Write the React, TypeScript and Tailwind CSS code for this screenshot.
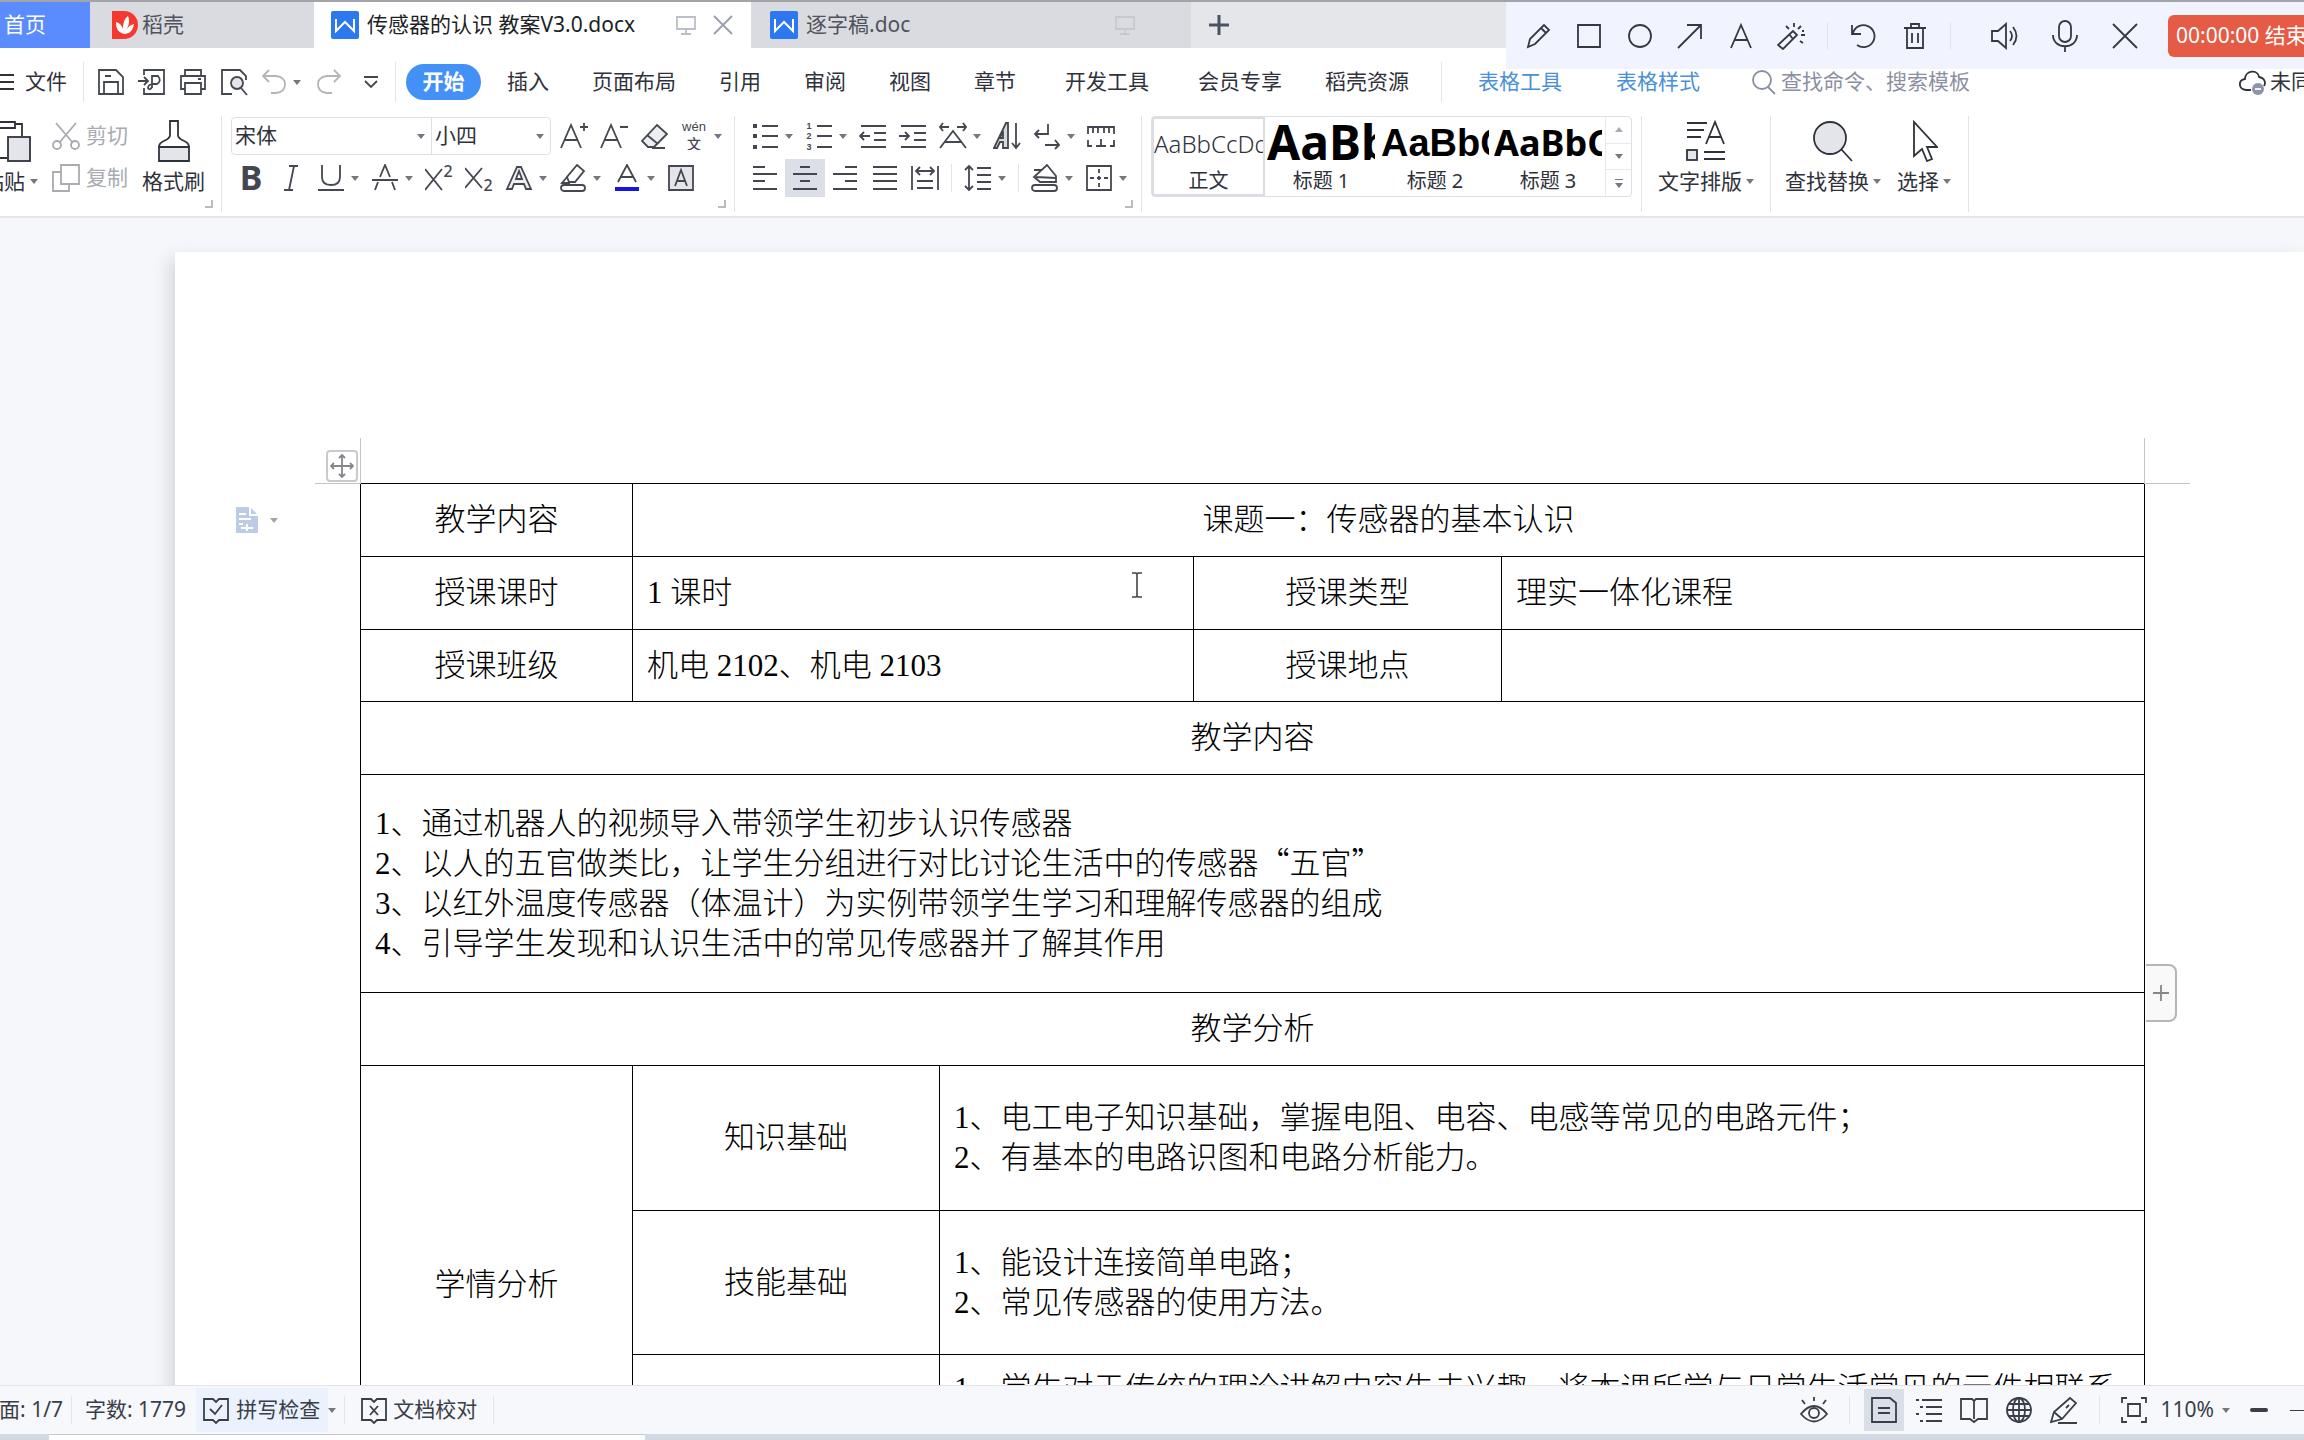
import type { ReactNode } from "react";

type ToolProps = {
  label: string;
  children: ReactNode;
  caret?: boolean;
  active?: boolean;
};

type StatusToolProps = {
  label: string;
  children: ReactNode;
  active?: boolean;
};

const mainMenus = ["插入", "页面布局", "引用", "审阅", "视图", "章节"];

function Svg({
  children,
  className = "h-7 w-7",
  viewBox = "0 0 28 28",
}: {
  children: ReactNode;
  className?: string;
  viewBox?: string;
}) {
  return (
    <svg
      viewBox={viewBox}
      fill="none"
      stroke="currentColor"
      strokeWidth="1.8"
      className={`shrink-0 ${className}`}
      aria-hidden="true"
    >
      {children}
    </svg>
  );
}

function Caret({ className = "text-[#74777f]" }: { className?: string }) {
  return (
    <svg
      viewBox="0 0 8 5"
      className={`h-[5px] w-2 shrink-0 ${className}`}
      aria-hidden="true"
    >
      <path d="M0 0h8L4 5z" fill="currentColor" />
    </svg>
  );
}

// 图标里的字母
function Letter({
  x = 14,
  y = 24,
  size = 28,
  weight = 300,
  children,
  className = "font-['Noto_Sans','Noto_Sans_CJK_SC',sans-serif]",
}: {
  x?: number;
  y?: number;
  size?: number;
  weight?: number;
  children: ReactNode;
  className?: string;
}) {
  return (
    <text
      x={x}
      y={y}
      fontSize={size}
      fontWeight={weight}
      textAnchor="middle"
      fill="currentColor"
      stroke="none"
      className={className}
    >
      {children}
    </text>
  );
}

function Tool({ label, children, caret, active }: ToolProps) {
  return (
    <button
      aria-label={label}
      className="flex h-10 items-center text-[#44474f]"
    >
      <span
        className={`flex h-[38px] w-10 items-center justify-center ${
          active ? "bg-[#dcdfe7]" : ""
        }`}
      >
        {children}
      </span>
      {caret && (
        <span className="flex w-[14px]">
          <Caret />
        </span>
      )}
    </button>
  );
}

function Divider({ className = "h-8" }: { className?: string }) {
  return <span className={`w-px shrink-0 bg-[#e3e4e8] ${className}`} />;
}

function Corner() {
  return (
    <span className="absolute bottom-2 right-2 h-2 w-2 border-b-2 border-r-2 border-[#b9bbc2]" />
  );
}

function WordLogo() {
  return (
    <svg viewBox="0 0 28 28" className="h-7 w-7 shrink-0" aria-hidden="true">
      <rect width="28" height="28" rx="2" fill="#2b78f0" />
      <path
        d="M5 8v12l9-9 9 9V8"
        fill="none"
        stroke="#fff"
        strokeWidth="2"
      />
    </svg>
  );
}

function Monitor({ className }: { className: string }) {
  return (
    <Svg className={`h-5 w-5 ${className}`} viewBox="0 0 20 20">
      <path d="M1 2h18v12H1zM10 14v4M5 19h10" />
    </Svg>
  );
}

function TabBar() {
  return (
    <nav className="flex h-12 border-t-2 border-[#a3a3aa] bg-[#e5e6e9] text-[21px] text-[#50535d]">
      <button className="w-[90px] bg-[#5a8cff] pl-1 text-left text-white">
        首页
      </button>
      <button className="flex w-[224px] items-center gap-1 bg-[#dadbe0] pl-[22px]">
        <svg viewBox="0 0 26 28" className="h-7 w-[26px]" aria-hidden="true">
          <path d="M0 0h12a14 14 0 0 1 0 28H0z" fill="#f5392f" />
          <path
            d="M12 23C5 21 4 16 4 11c4 1 6 4 7 7 0-5 1-10 5-13 2 5 1 10-2 14 2-3 4-5 8-6-1 6-4 10-10 10z"
            fill="#fff"
          />
        </svg>
        稻壳
      </button>
      <div className="flex w-[437px] items-center bg-white pl-[17px] text-[#1d1f26]">
        <button className="flex items-center gap-2 whitespace-nowrap">
          <WordLogo />
          传感器的认识 教案V3.0.docx
        </button>
        <span className="ml-auto mr-[17px] flex">
          <Monitor className="text-[#bcbfc9]" />
        </span>
        <button aria-label="关闭" className="mr-[18px] text-[#9a9eac]">
          <Svg className="h-5 w-5" viewBox="0 0 20 20">
            <path d="M1 1l18 18M19 1L1 19" />
          </Svg>
        </button>
      </div>
      <div className="flex w-[440px] items-center bg-[#dadbe0] pl-[19px]">
        <button className="flex items-center gap-2">
          <WordLogo />
          逐字稿.doc
        </button>
        <span className="ml-auto mr-[56px] flex">
          <Monitor className="text-[#c6c9d2]" />
        </span>
      </div>
      <button aria-label="新建" className="ml-[18px] text-[#4a5160]">
        <Svg className="h-5 w-5" viewBox="0 0 20 20">
          <path d="M10 0v20M0 10h20" strokeWidth="3" />
        </Svg>
      </button>
    </nav>
  );
}

function RecorderBar() {
  return (
    <div className="absolute right-0 top-[2px] flex h-[67px] w-[798px] items-center overflow-hidden bg-[#f1f4fe] pl-[19px] text-[#343842]">
      <div className="flex w-[280px] shrink-0 items-center justify-between">
        <button aria-label="画笔">
          <Svg>
            <path d="M3 25l2-8L19 3l5 5L10 22zM16 6l5 5" />
          </Svg>
        </button>
        <button aria-label="矩形">
          <Svg>
            <path d="M3 3h22v22H3z" />
          </Svg>
        </button>
        <button aria-label="椭圆">
          <Svg>
            <circle cx="14" cy="14" r="11" />
          </Svg>
        </button>
        <button aria-label="箭头">
          <Svg>
            <path d="M2 26L25 3M11 3h14v14" />
          </Svg>
        </button>
        <button aria-label="文字">
          <Svg>
            <path d="M4 26L14 3l10 23M7 18h14" />
          </Svg>
        </button>
        <button aria-label="魔棒">
          <Svg>
            <path d="M1 23L16 9l4 4L6 27zM12 12l4 5M17 1v4M24 4l-3 3M24 13h4M9 4l3 3M23 19l3 2M25 9h2" />
          </Svg>
        </button>
      </div>
      <Divider className="ml-[22px] h-7 bg-[#b9bcc7]" />
      <div className="ml-[21px] flex shrink-0 items-center gap-6">
        <button aria-label="撤销">
          <Svg>
            <path d="M3 3v9h9M4 11a11 11 0 1 1 4 12" />
          </Svg>
        </button>
        <button aria-label="清除">
          <Svg>
            <path d="M3 6h22M10 6V2h8v4M6 6v20h16V6M11 11v10M17 11v10" />
          </Svg>
        </button>
      </div>
      <Divider className="ml-[21px] h-7 bg-[#b9bcc7]" />
      <div className="ml-10 flex shrink-0 items-center gap-8">
        <button aria-label="声音">
          <Svg>
            <path d="M1 9h6l8-7v24l-8-7H1zM19 9q4 5 0 10M22 5q7 9 0 18" />
          </Svg>
        </button>
        <button aria-label="麦克风">
          <Svg className="h-8 w-7" viewBox="0 0 28 32">
            <rect x="8" y="1" width="12" height="21" rx="6" />
            <path d="M2 15c0 15 24 15 24 0M14 26v6" />
          </Svg>
        </button>
        <button aria-label="退出">
          <Svg>
            <path d="M2 2l24 24M26 2L2 26" />
          </Svg>
        </button>
      </div>
      <button className="ml-[29px] h-[42px] w-[150px] shrink-0 whitespace-nowrap rounded-md bg-[#e55b46] pl-2 text-left text-[21px] text-white">
        00:00:00 结束
      </button>
    </div>
  );
}

function MenuBar() {
  return (
    <div className="flex h-[68px] items-center whitespace-nowrap text-[21px] text-[#2f323b]">
      <button className="flex w-[67px] items-center gap-[11px]">
        <Svg className="h-4 w-[14px]" viewBox="0 0 14 16">
          <path d="M0 1h14M0 8h14M0 15h14" />
        </Svg>
        文件
      </button>
      <Divider className="ml-4 h-10" />
      <div className="ml-[13px] flex items-center gap-[13px] text-[#44474f]">
        <button aria-label="保存">
          <Svg>
            <path d="M2 2h17l7 7v17H2zM7 26V14h14v12M8 8h6" />
          </Svg>
        </button>
        <button aria-label="输出为PDF">
          <Svg>
            <path d="M6 7V2h20v24H6v-6M0 13h9M6 9l4 4-4 4M14 20V8h6q4 5-1 8h-5q-4 1-4 4 2 3 4-1" />
          </Svg>
        </button>
        <button aria-label="打印">
          <Svg>
            <path d="M6 8V2h16v6M6 21H2V8h24v13h-4M6 15h16v11H6zM19 11h3" />
          </Svg>
        </button>
        <button aria-label="打印预览">
          <Svg>
            <path d="M12 26H2V2h18l6 6v4" />
            <circle cx="17" cy="15" r="6" fill="#e3e5ea" />
            <path d="M21 20l6 7" />
          </Svg>
        </button>
        <button
          aria-label="撤销"
          className="flex items-center gap-1 text-[#b3b5bb]"
        >
          <Svg>
            <path d="M8 2L2 8l6 6M2 8h13q9 1 9 8.500t-9 8.500H10" />
          </Svg>
          <Caret />
        </button>
        <button aria-label="恢复" className="text-[#b3b5bb]">
          <Svg>
            <path d="M20 2l6 6-6 6M26 8H13q-9 1-9 8.500t9 8.500h5" />
          </Svg>
        </button>
        <button aria-label="自定义快速访问工具栏" className="pl-2 pr-1">
          <Svg className="h-3 w-4" viewBox="0 0 16 12">
            <path d="M1 1h14M2 5l6 6 6-6" />
          </Svg>
        </button>
      </div>
      <Divider className="ml-3 h-10" />
      <button className="ml-[10px] mr-[26px] h-9 w-[75px] rounded-full bg-[#4390f7] font-bold text-white">
        开始
      </button>
      <div className="flex items-center gap-[43px]">
        {mainMenus.map((menu) => (
          <button key={menu}>{menu}</button>
        ))}
        <button className="mx-[6px]">开发工具</button>
        <button>会员专享</button>
        <button>稻壳资源</button>
      </div>
      <Divider className="mx-8 h-10" />
      <button className="ml-1 text-[#4a90d9]">表格工具</button>
      <button className="ml-[54px] text-[#4a90d9]">表格样式</button>
      <label className="ml-[51px] flex items-center gap-1 text-[#8b8fa3]">
        <Svg className="h-7 w-[26px]" viewBox="0 0 26 28">
          <circle cx="11" cy="12" r="9" />
          <path d="M17 19l7 7" />
        </Svg>
        <input
          aria-label="查找"
          placeholder="查找命令、搜索模板"
          className="w-[200px] outline-none placeholder:text-[#8b8fa3]"
        />
      </label>
      <button className="ml-auto flex w-[66px] shrink-0 items-center gap-1 overflow-hidden">
        <Svg>
          <path d="M13 22H8C0 21 0 12 7 11 7 2 20 1 21 9c6 1 7 6 5 9" />
          <circle cx="20" cy="21" r="6" fill="#8d93a8" stroke="none" />
          <path d="M17 21h6" stroke="#fff" />
        </Svg>
        未同步
      </button>
    </div>
  );
}

function ClipboardGroup() {
  return (
    <section className="relative flex h-full w-[221px] shrink-0 overflow-hidden">
      <button className="flex w-[38px] flex-col items-end">
        <Svg className="mt-1 h-[42px] w-[38px]" viewBox="0 0 38 42">
          <path d="M0 2h15v6H0M15 4h7v12M0 38h7" />
          <rect x="8" y="17" width="22" height="24" fill="#e3e5ea" />
        </Svg>
        <span className="mt-1 flex items-center gap-[5px]">
          粘贴
          <Caret />
        </span>
      </button>
      <div className="ml-[14px] flex flex-col gap-[2px] text-[#a9abb2]">
        <button className="flex h-10 items-center gap-[6px]">
          <Svg>
            <path d="M4 1l17 20M24 1L7 21" />
            <circle cx="5" cy="23" r="4" />
            <circle cx="23" cy="23" r="4" />
          </Svg>
          剪切
        </button>
        <button className="flex h-10 items-center gap-[6px]">
          <Svg>
            <path d="M9 1h18v19H9zM9 8H1v19h16v-7" />
          </Svg>
          复制
        </button>
      </div>
      <button className="ml-[14px] flex flex-col items-center">
        <Svg className="mt-1 h-[42px] w-[34px]" viewBox="0 0 34 42">
          <path d="M2 27h30v14H2z" fill="#e3e5ea" />
          <path d="M2 27c0-8 11-5 11-12V1h8v14c0 7 11 4 11 12" />
        </Svg>
        <span className="mt-1">格式刷</span>
      </button>
      <Corner />
    </section>
  );
}

function FontGroup() {
  return (
    <section className="relative h-full w-[512px] shrink-0 pl-[9px]">
      <div className="flex h-10 items-center">
        <div className="mr-[3px] flex h-[38px] w-[320px] rounded border border-[#dfe0e5]">
          <label className="relative flex w-[200px] items-center border-r border-[#dfe0e5]">
            <select
              aria-label="字体"
              className="w-full appearance-none pl-[3px] outline-none"
            >
              <option>宋体</option>
            </select>
            <Caret className="pointer-events-none absolute right-[6px] text-[#74777f]" />
          </label>
          <label className="relative flex flex-1 items-center">
            <select
              aria-label="字号"
              className="w-full appearance-none pl-[3px] outline-none"
            >
              <option>小四</option>
            </select>
            <Caret className="pointer-events-none absolute right-[6px] text-[#74777f]" />
          </label>
        </div>
        <Tool label="增大字号">
          <Svg>
            <path d="M1 26L11 3l10 23M4 18h14M20 5h8M24 1v8" />
          </Svg>
        </Tool>
        <Tool label="减小字号">
          <Svg>
            <path d="M1 26L11 3l10 23M4 18h14M20 5h8" />
          </Svg>
        </Tool>
        <Tool label="清除格式">
          <Svg>
            <path d="M17 3l10 9-13 13H8l-6-6z" fill="#eceef2" />
            <path d="M7 13l11 9M12 26h13" />
          </Svg>
        </Tool>
        <Tool label="拼音指南" caret>
          <Svg>
            <Letter
              y={9}
              size={13}
              weight={400}
              className="font-['Liberation_Sans',sans-serif]"
            >
              wén
            </Letter>
            <Letter
              y={27}
              size={14}
              weight={500}
              className="font-['Noto_Sans_CJK_SC',sans-serif]"
            >
              文
            </Letter>
          </Svg>
        </Tool>
      </div>
      <div className="mt-[2px] flex h-10 items-center">
        <Tool label="加粗">
          <Svg>
            <Letter y={26} size={34} weight={700}>
              B
            </Letter>
          </Svg>
        </Tool>
        <Tool label="倾斜">
          <Svg>
            <path d="M12 2h9M7 26h9M17 2l-5 24" />
          </Svg>
        </Tool>
        <Tool label="下划线" caret>
          <Svg>
            <path d="M5 1v12q0 8 9 8t9-8V1M1 26h26" />
          </Svg>
        </Tool>
        <Tool label="删除线" caret>
          <Svg>
            <path d="M9 13l5-12 5 12M7 18L4 26M21 18l3 8M1 16h26" />
          </Svg>
        </Tool>
        <Tool label="上标">
          <Svg>
            <path d="M0 5l17 21M17 5L0 26" />
            <Letter x={23} y={13} size={16} weight={500}>
              2
            </Letter>
          </Svg>
        </Tool>
        <Tool label="下标">
          <Svg>
            <path d="M0 4l17 20M17 4L0 24" />
            <Letter x={23} y={27} size={16} weight={500}>
              2
            </Letter>
          </Svg>
        </Tool>
        <Tool label="文字效果" caret>
          <Svg>
            <path
              d="M2 25L12 3h4l10 22h-5l-2-5H9l-2 5zM11 15h6l-3-8z"
              fill="#eceef2"
            />
          </Svg>
        </Tool>
        <Tool label="突出显示" caret>
          <Svg>
            <path d="M18 1l7 6-9 11h-6l-2-5zM8 13l-5 6h8" />
            <rect x="2" y="21" width="24" height="6" rx="3" />
          </Svg>
        </Tool>
        <Tool label="字体颜色" caret>
          <Svg>
            <path d="M5 18L14 1l9 17M8 13h12" />
            <path d="M2 25h24" stroke="#1414e6" strokeWidth="4" />
          </Svg>
        </Tool>
        <Tool label="字符底纹">
          <Svg>
            <path d="M2 2h24v24H2z" fill="#e3e5ea" />
            <path d="M8 22l6-16 6 16M10 17h8" />
          </Svg>
        </Tool>
      </div>
      <Corner />
    </section>
  );
}

function ParagraphGroup() {
  return (
    <section className="relative h-full w-[406px] shrink-0 pl-[10px]">
      <div className="flex h-10 items-center">
        <Tool label="项目符号" caret>
          <Svg>
            <path d="M11 4h16M11 14h16M11 25h16" />
            <path d="M2 4h4M2 14h4M2 25h4" strokeWidth="4" />
          </Svg>
        </Tool>
        <Tool label="编号" caret>
          <Svg>
            <path d="M12 4h15M12 14h15M12 25h15" />
            <Letter
              x={4}
              y={7}
              size={9}
              weight={700}
              className="font-['Liberation_Sans',sans-serif]"
            >
              1
            </Letter>
            <Letter
              x={4}
              y={17}
              size={9}
              weight={700}
              className="font-['Liberation_Sans',sans-serif]"
            >
              2
            </Letter>
            <Letter
              x={4}
              y={28}
              size={9}
              weight={700}
              className="font-['Liberation_Sans',sans-serif]"
            >
              3
            </Letter>
          </Svg>
        </Tool>
        <Tool label="减少缩进量">
          <Svg>
            <path d="M2 4h25M15 11h12M15 18h12M2 25h25M11 14H1M5 10l-4 4 4 4" />
          </Svg>
        </Tool>
        <Tool label="增加缩进量">
          <Svg>
            <path d="M2 4h25M15 11h12M15 18h12M2 25h25M0 14h10M6 10l4 4-4 4" />
          </Svg>
        </Tool>
        <Tool label="中文版式" caret>
          <Svg>
            <path d="M1 26l13-17 13 17M6 20h16M1 5h9M4 1L1 5l3 4M18 5h9M24 1l3 4-3 4" />
          </Svg>
        </Tool>
        <Tool label="排序">
          <Svg>
            <path
              d="M1 26L13 1h2v25h-5v-6H7l-3 6zM10 16V9l-3 7z"
              fill="#d6d9e0"
            />
            <path d="M23 1v25M19 21l4 5 4-5" />
          </Svg>
        </Tool>
        <Tool label="显示段落标记" caret>
          <Svg>
            <path d="M15 2v10H2M6 8l-4 4 4 4M12 23h14M22 18l4 5-4 4" />
          </Svg>
        </Tool>
        <Tool label="制表位">
          <Svg>
            <path d="M1 12V5h26v7M6 5v6M11 5v6M17 5v6M22 5v6M1 18v6h4M27 18v6h-4M14 17v7M9 24h10" />
          </Svg>
        </Tool>
      </div>
      <div className="mt-[2px] flex h-10 items-center">
        <Tool label="左对齐">
          <Svg>
            <path d="M2 3h12M2 10h24M2 17h12M2 25h24" />
          </Svg>
        </Tool>
        <Tool label="居中对齐" active>
          <Svg>
            <path d="M9 3h10M2 10h24M9 17h10M2 25h24" />
          </Svg>
        </Tool>
        <Tool label="右对齐">
          <Svg>
            <path d="M14 3h12M2 10h24M14 17h12M2 25h24" />
          </Svg>
        </Tool>
        <Tool label="两端对齐">
          <Svg>
            <path d="M2 3h24M2 10h24M2 17h24M2 25h24" />
          </Svg>
        </Tool>
        <Tool label="分散对齐">
          <Svg>
            <path d="M1 2v24M27 2v24M6 17h16M6 24h16M5 7h18M9 3L5 7l4 4M19 3l4 4-4 4" />
          </Svg>
        </Tool>
        <Divider className="mx-[6px] h-7" />
        <Tool label="行距" caret>
          <Svg>
            <path d="M13 4h14M13 11h14M13 18h14M13 25h14M5 2v24M1 6l4-4 4 4M1 22l4 4 4-4" />
          </Svg>
        </Tool>
        <Divider className="mx-[6px] h-7" />
        <Tool label="底纹颜色" caret>
          <Svg>
            <path d="M16 1l9 11v6H9l-6-5zM3 6h8M5 13l20 1" />
            <rect x="1" y="21" width="25" height="6" rx="3" />
          </Svg>
        </Tool>
        <Tool label="边框" caret>
          <Svg>
            <path d="M2 2h24v24H2z" />
            <path d="M14 5v18M5 14h18" strokeDasharray="4 3" />
          </Svg>
        </Tool>
      </div>
      <Corner />
    </section>
  );
}

function StyleGallery() {
  return (
    <section className="flex h-full w-[499px] shrink-0 px-[9px]">
      <div className="flex h-[81px] w-full rounded border border-[#dfe0e5] text-[20px]">
        <button className="flex w-[113px] flex-col border-2 border-[#dcdde2]">
          <span className="h-[50px] w-full overflow-hidden whitespace-nowrap text-left text-[24px] leading-[50px] font-light">
            AaBbCcDd
          </span>
          <span className="w-full leading-6">正文</span>
        </button>
        <button className="flex w-[114px] flex-col pl-[2px]">
          <span className="h-[52px] w-[108px] overflow-hidden whitespace-nowrap text-left text-[48px] leading-[50px] font-bold text-black">
            AaBb
          </span>
          <span className="w-[108px] leading-6">标题 1</span>
        </button>
        <button className="flex w-[113px] flex-col pl-[2px]">
          <span className="h-[52px] w-[108px] overflow-hidden whitespace-nowrap text-left font-['Liberation_Sans',sans-serif] text-[38px] leading-[52px] font-bold text-black">
            AaBbC
          </span>
          <span className="w-[108px] leading-6">标题 2</span>
        </button>
        <button className="flex w-[113px] flex-col pl-[2px]">
          <span className="h-[52px] w-[108px] overflow-hidden whitespace-nowrap text-left text-[36px] leading-[52px] font-bold text-black">
            AaBbC
          </span>
          <span className="w-[108px] leading-6">标题 3</span>
        </button>
        <div className="flex flex-1 flex-col divide-y divide-[#e8e9ed] border-l border-[#e8e9ed] text-[#74777f]">
          <button
            aria-label="上一行"
            className="flex flex-1 items-center justify-center"
          >
            <Caret className="rotate-180 text-[#a9abb2]" />
          </button>
          <button
            aria-label="下一行"
            className="flex flex-1 items-center justify-center"
          >
            <Caret />
          </button>
          <button
            aria-label="更多样式"
            className="flex flex-1 flex-col items-center justify-center gap-[3px]"
          >
            <span className="h-px w-2 bg-[#74777f]" />
            <Caret />
          </button>
        </div>
      </div>
    </section>
  );
}

function Ribbon() {
  return (
    <div className="flex h-[102px] items-start whitespace-nowrap border-b-2 border-[#e6e7ea] text-[21px] text-[#2f323b]">
      <ClipboardGroup />
      <Divider className="h-24" />
      <FontGroup />
      <Divider className="h-24" />
      <ParagraphGroup />
      <Divider className="h-24" />
      <StyleGallery />
      <Divider className="h-24" />
      <button className="flex w-32 shrink-0 flex-col items-center">
        <Svg className="mt-1 h-[42px] w-10" viewBox="0 0 40 42">
          <path d="M1 3h20M1 10h17M1 17h14M20 24L29 2l9 22M23 17h12M18 32h21M18 39h21" />
          <rect x="1" y="30" width="10" height="10" fill="#e3e5ea" />
        </Svg>
        <span className="mt-1 flex items-center gap-1">
          文字排版
          <Caret />
        </span>
      </button>
      <Divider className="h-24" />
      <div className="flex w-[197px] shrink-0 gap-4 pl-[14px]">
        <button className="flex flex-col items-center">
          <Svg className="mt-1 h-[42px] w-10" viewBox="0 0 40 42">
            <circle cx="17" cy="18" r="16" fill="#e3e5ea" />
            <path d="M28 29l11 12" />
          </Svg>
          <span className="mt-1 flex items-center gap-1">
            查找替换
            <Caret />
          </span>
        </button>
        <button className="flex flex-col items-center">
          <Svg className="mt-1 h-[42px] w-7" viewBox="0 0 28 42">
            <path d="M4 2v34l8-7 5 12 5-2-5-12h10z" />
          </Svg>
          <span className="mt-1 flex items-center gap-1">
            选择
            <Caret />
          </span>
        </button>
      </div>
      <Divider className="h-24" />
    </div>
  );
}

function LessonTable() {
  return (
    <table className="w-full table-fixed border-collapse text-[31px] leading-10 font-light text-black [&_td]:border [&_td]:border-black [&_td]:px-[14px] [&_td]:py-0 [&_th]:border [&_th]:border-black [&_th]:p-0 [&_th]:font-light">
      <colgroup>
        <col className="w-[272px]" />
        <col className="w-[307px]" />
        <col className="w-[254px]" />
        <col className="w-[308px]" />
        <col />
      </colgroup>
      <tbody>
        <tr className="h-[73px]">
          <th>教学内容</th>
          <td colSpan={4} className="text-center">
            课题一：传感器的基本认识
          </td>
        </tr>
        <tr className="h-[73px]">
          <th>授课课时</th>
          <td colSpan={2}>1 课时</td>
          <th>授课类型</th>
          <td>理实一体化课程</td>
        </tr>
        <tr className="h-[72px]">
          <th>授课班级</th>
          <td colSpan={2}>机电 2102、机电 2103</td>
          <th>授课地点</th>
          <td />
        </tr>
        <tr className="h-[73px]">
          <th colSpan={5}>教学内容</th>
        </tr>
        <tr className="h-[218px]">
          <td colSpan={5}>
            <p>1、通过机器人的视频导入带领学生初步认识传感器</p>
            <p>
              2、以人的五官做类比，让学生分组进行对比讨论生活中的传感器
              <span className="font-['Noto_Sans_CJK_SC',sans-serif] leading-none">
                “五官”
              </span>
            </p>
            <p>3、以红外温度传感器（体温计）为实例带领学生学习和理解传感器的组成</p>
            <p>4、引导学生发现和认识生活中的常见传感器并了解其作用</p>
          </td>
        </tr>
        <tr className="h-[73px]">
          <th colSpan={5}>教学分析</th>
        </tr>
        <tr className="h-[145px]">
          <th rowSpan={3}>学情分析</th>
          <th>知识基础</th>
          <td colSpan={3}>
            <p>1、电工电子知识基础，掌握电阻、电容、电感等常见的电路元件；</p>
            <p>2、有基本的电路识图和电路分析能力。</p>
          </td>
        </tr>
        <tr className="h-[144px]">
          <th>技能基础</th>
          <td colSpan={3}>
            <p>1、能设计连接简单电路；</p>
            <p>2、常见传感器的使用方法。</p>
          </td>
        </tr>
        <tr className="h-[149px]">
          <th />
          <td colSpan={3}>
            <p className="whitespace-nowrap">
              1、学生对于传统的理论讲解内容失去兴趣，将本课所学与日常生活常见的元件相联系
            </p>
            <p>&nbsp;</p>
            <p>&nbsp;</p>
          </td>
        </tr>
      </tbody>
    </table>
  );
}

function DocumentArea() {
  return (
    <main className="min-h-0 flex-1 overflow-hidden bg-[#f6f7fb] pl-[175px] pt-[34px]">
      <div className="bg-white pb-20 pl-[185px] pr-[159px] pt-[231px] font-['Liberation_Serif','Noto_Sans_CJK_SC',serif] shadow-[-6px_6px_16px_0_#d5d8df]">
        <div className="relative">
          {/* 版心角线与表格控件 */}
          <span className="absolute -left-[45px] -top-[45px] h-[46px] w-[46px] border-b border-r border-[#c4c4c4]" />
          <span className="absolute -right-[45px] -top-[45px] h-[46px] w-[46px] border-b border-l border-[#c4c4c4]" />
          <button
            aria-label="移动表格"
            className="absolute -left-[34px] -top-[33px] flex h-8 w-8 items-center justify-center rounded border-2 border-[#c9cacd] bg-white text-[#85878c]"
          >
            <Svg className="h-6 w-6" viewBox="0 0 24 24">
              <path d="M12 1v22M1 12h22M9 4l3-3 3 3M9 20l3 3 3-3M4 9l-3 3 3 3M20 9l3 3-3 3" />
            </Svg>
          </button>
          <button
            aria-label="段落布局"
            className="absolute -left-[124px] top-6 flex items-center gap-3"
          >
            <svg viewBox="0 0 22 26" className="h-[26px] w-[22px]">
              <path d="M0 0h14l8 8v18H0z" fill="#bccbe6" />
              <path
                d="M14 0v8h8M3 7h7M3 12h12M3 17h4M5 21h12M11 17v7"
                fill="none"
                stroke="#fff"
                strokeWidth="2"
              />
            </svg>
            <Caret className="text-[#a3a5aa]" />
          </button>
          <LessonTable />
          <button
            aria-label="添加行"
            className="absolute -right-8 top-[481px] flex h-[58px] w-[31px] items-center justify-center rounded-r-lg border-2 border-l-0 border-[#b5b6b9] bg-[#f9f9fa] text-[#85878c]"
          >
            <Svg className="h-4 w-4" viewBox="0 0 16 16">
              <path d="M8 0v16M0 8h16" />
            </Svg>
          </button>
          {/* 鼠标光标 */}
          <svg
            viewBox="0 0 10 26"
            className="absolute left-[772px] top-[89px] h-[26px] w-[10px]"
            aria-hidden="true"
          >
            <path
              d="M0 1h4l1 1 1-1h4M5 2v22M0 25h4l1-1 1 1h4"
              fill="none"
              stroke="#444"
              strokeWidth="1.6"
            />
          </svg>
        </div>
      </div>
    </main>
  );
}

function StatusTool({ label, children, active }: StatusToolProps) {
  return (
    <button
      aria-label={label}
      className="flex h-[42px] w-[45px] items-center justify-center"
    >
      <span
        className={`flex h-[42px] w-10 items-center justify-center ${
          active ? "bg-[#dadee6]" : ""
        }`}
      >
        {children}
      </span>
    </button>
  );
}

function StatusBar() {
  return (
    <footer className="shrink-0">
      <div className="flex h-[49px] items-center whitespace-nowrap border-t border-[#e1e3e8] bg-[#f6f8fc] text-[21px] text-[#3a3e48]">
        <span className="flex w-[63px] shrink-0 justify-end">页面: 1/7</span>
        <Divider className="ml-2 h-7" />
        <span className="ml-[13px]">字数: 1779</span>
        <button className="ml-[10px] flex h-11 items-center gap-[6px] bg-[#ebf2fd] pl-[6px] pr-2">
          <Svg>
            <path d="M11 3H2v21h9l3 3 3-3h9V3h-9l-3 3zM8 13l5 5 7-9" />
          </Svg>
          拼写检查
        </button>
        <Caret />
        <Divider className="ml-2 h-7" />
        <button className="ml-[15px] flex items-center gap-[5px]">
          <Svg>
            <path d="M11 3H2v21h9l3 3 3-3h9V3h-9l-3 3zM10 10l8 9M18 10l-8 9" />
          </Svg>
          文档校对
        </button>
        <Divider className="ml-4 h-7" />
        <div className="ml-auto flex shrink-0 items-center">
          <StatusTool label="护眼模式">
            <Svg>
              <path d="M1 18q13-16 26 0-13 15-26 0zM14 1v4M2 4l3 4M26 4l-3 4" />
              <circle cx="14" cy="17" r="5" />
            </Svg>
          </StatusTool>
          <Divider className="mx-3 h-7" />
          <StatusTool label="页面视图" active>
            <Svg>
              <path d="M2 2h18l6 5v19H2zM8 12h12M8 17h12" />
            </Svg>
          </StatusTool>
          <StatusTool label="大纲">
            <Svg>
              <path d="M7 4h20M11 11h16M11 18h16M11 25h16M1 4h3M5 11h3M1 18h3M5 25h3" />
            </Svg>
          </StatusTool>
          <StatusTool label="阅读版式">
            <Svg>
              <path d="M12 3H1v20h9l4 3 4-3h9V3H16l-2 2zM14 5v18" />
            </Svg>
          </StatusTool>
          <StatusTool label="Web版式">
            <Svg>
              <circle cx="14" cy="14" r="12" />
              <ellipse cx="14" cy="14" rx="6" ry="12" />
              <path d="M14 2v24M4 8h20M2 14h24M4 20h20" />
            </Svg>
          </StatusTool>
          <StatusTool label="写作模式">
            <Svg>
              <path d="M1 26l3-10L20 2l6 5-14 16zM4 16l8 7M16 12l3-3M8 27h19" />
            </Svg>
          </StatusTool>
          <Divider className="mx-3 h-7" />
          <StatusTool label="适合页面">
            <Svg>
              <path d="M7 2H2v5M21 2h5v5M7 26H2v-5M21 26h5v-5M8 8h12v12H8z" />
            </Svg>
          </StatusTool>
          <button className="flex items-center gap-2 pl-1">
            110%
            <Caret />
          </button>
          <button aria-label="缩小" className="ml-5 py-4">
            <span className="block h-1 w-[18px] rounded-sm bg-[#3a3e48]" />
          </button>
          <span className="ml-[22px] h-px w-[14px] bg-[#3a3e48]" />
        </div>
      </div>
      <div className="h-[6px] bg-[#d3d9e3] pl-[49px]">
        <div className="h-full w-[596px] border-t border-[#c5c8ce] bg-white" />
      </div>
    </footer>
  );
}

function App() {
  return (
    <div className="relative flex h-screen flex-col overflow-hidden bg-white font-['Noto_Sans','Noto_Sans_CJK_SC',sans-serif]">
      <header className="shrink-0">
        <TabBar />
        <MenuBar />
        <Ribbon />
      </header>
      <DocumentArea />
      <StatusBar />
      <RecorderBar />
    </div>
  );
}

export default App;
